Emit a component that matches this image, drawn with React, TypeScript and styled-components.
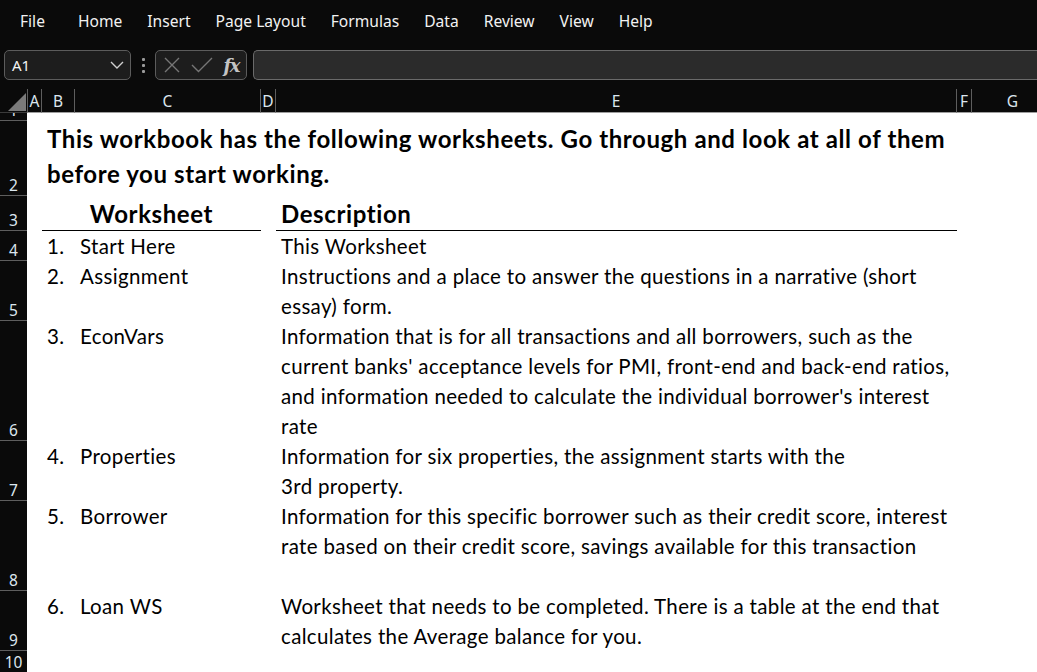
import { FC } from 'react';
import styled, { createGlobalStyle } from 'styled-components';

const GlobalStyle = createGlobalStyle`
  html, body {
    margin: 0;
    padding: 0;
    background: #0a0a0a;
    overflow: hidden;
  }
  * { box-sizing: border-box; }
`;

const Page = styled.div`
  width: 1037px;
  height: 672px;
  overflow: hidden;
  background: #0a0a0a;
  font-family: 'Segoe UI', 'Noto Sans', sans-serif;
  color: #fff;
`;

const MenuBar = styled.nav`
  height: 42px;
  display: flex;
  align-items: center;
  padding-left: 20px;
  gap: 25px;
  font-size: 15.6px;
`;

const MenuItem = styled.span<{ $first?: boolean }>`
  color: #f2f2f2;
  margin-right: ${({ $first }) => ($first ? '8px' : '0')};
`;

const FormulaBar = styled.div`
  display: flex;
  align-items: center;
  padding: 8px 0 9px 4px;
  gap: 6px;
`;

const NameBox = styled.div`
  width: 127px;
  height: 30px;
  border: 1px solid #5c5c5c;
  border-radius: 5px;
  background: #1d1d1d;
  display: flex;
  align-items: center;
  justify-content: space-between;
  padding: 0 6px 0 7px;
  font-size: 15px;
  color: #f4f4f4;
`;

const Grip = styled.div`
  width: 12px;
  display: flex;
  flex-direction: column;
  align-items: center;
  gap: 3px;
  span {
    width: 3px;
    height: 3px;
    background: #9a9a9a;
    border-radius: 1px;
  }
`;

const FormulaButtons = styled.div`
  width: 92px;
  height: 30px;
  border: 1px solid #5c5c5c;
  border-radius: 5px;
  background: #1d1d1d;
  display: flex;
  align-items: center;
  justify-content: space-between;
  padding: 0 5px 0 7px;
`;

const Fx = styled.span`
  font-family: 'DejaVu Serif', 'Liberation Serif', serif;
  font-style: italic;
  font-weight: 700;
  font-size: 18px;
  color: #c4c4c4;
  letter-spacing: -1.5px;
  padding-right: 2px;
`;

const FormulaInput = styled.div`
  flex: 1;
  height: 30px;
  border: 1px solid #6a6a6a;
  border-right: none;
  border-radius: 5px 0 0 5px;
  background: #2b2b2b;
`;

const Sheet = styled.div`
  display: grid;
  grid-template-columns: 27px 15px 33px 186px 15px 681px 15px 82px;
  grid-template-rows: 24px 8px 75px 35px 30px 60px 120px 60px 90px 60px 22px;
`;

const Corner = styled.div`
  position: relative;
  border-bottom: 1px solid #3a3a3a;
  svg { position: absolute; left: 8px; top: 4px; }
`;

const ColHead = styled.div<{ $sep?: boolean }>`
  border-bottom: 1px solid #9e9e9e;
  border-right: ${({ $sep }) => ($sep ? '1px solid #5e5e5e' : '1px solid transparent')};
  display: flex;
  align-items: center;
  justify-content: center;
  font-size: 15.5px;
  color: #dce6ee;
  padding-top: 1px;
`;

const ColHeadLeft = styled(ColHead)`
  border-left: 1px solid #5e5e5e;
`;

const RowHead = styled.div`
  grid-column: 1;
  border-bottom: 1px solid #5e5e5e;
  display: flex;
  align-items: flex-end;
  justify-content: center;
  font-size: 15.5px;
  line-height: 19px;
  color: #dce6ee;
  overflow: hidden;
`;

const Cell = styled.div<{ $col: string; $bold?: boolean; $center?: boolean; $rule?: boolean }>`
  grid-column: ${({ $col }) => $col};
  background: #fff;
  color: #000;
  font-family: Lato, 'Noto Sans', sans-serif;
  font-size: ${({ $bold }) => ($bold ? 24 : 20.5)}px;
  letter-spacing: ${({ $bold }) => ($bold ? 0.6 : 0.34)}px;
  line-height: ${({ $bold }) => ($bold ? 35 : 30)}px;
  font-weight: ${({ $bold }) => ($bold ? 700 : 400)};
  text-align: ${({ $center }) => ($center ? 'center' : 'left')};
  padding-left: ${({ $center }) => ($center ? '0' : '5px')};
  border-bottom: ${({ $rule }) => ($rule ? '1.5px solid #000' : 'none')};
  white-space: nowrap;
  overflow: visible;
`;

const Blank = styled.div<{ $col: string }>`
  grid-column: ${({ $col }) => $col};
  background: #fff;
`;

const XIcon = () => (
  <svg width="18" height="18" viewBox="0 0 18 18" fill="none" stroke="#767676" strokeWidth="1.4">
    <path d="M2 2 L16 16 M16 2 L2 16" />
  </svg>
);

const CheckIcon = () => (
  <svg width="22" height="18" viewBox="0 0 22 18" fill="none" stroke="#767676" strokeWidth="1.4">
    <path d="M1 9 L7.5 15.5 L21 2" />
  </svg>
);

const Chevron = () => (
  <svg width="14" height="8" viewBox="0 0 14 8" fill="none" stroke="#d0d0d0" strokeWidth="1.4">
    <path d="M1 1 L7 7 L13 1" />
  </svg>
);

type Item = { num: string; name: string; desc: string[] };

const items: Item[] = [
  { num: '1.', name: 'Start Here', desc: ['This Worksheet'] },
  { num: '2.', name: 'Assignment', desc: ['Instructions and a place to answer the questions in a narrative (short', 'essay) form.'] },
  {
    num: '3.',
    name: 'EconVars',
    desc: [
      'Information that is for all transactions and all borrowers, such as the',
      "current banks' acceptance levels for PMI, front-end and back-end ratios,",
      "and information needed to calculate the individual borrower's interest",
      'rate',
    ],
  },
  { num: '4.', name: 'Properties', desc: ['Information for six properties, the assignment starts with the', '3rd property.'] },
  {
    num: '5.',
    name: 'Borrower',
    desc: [
      'Information for this specific borrower such as their credit score, interest',
      'rate based on their credit score, savings available for this transaction',
    ],
  },
  { num: '6.', name: 'Loan WS', desc: ['Worksheet that needs to be completed. There is a table at the end that', 'calculates the Average balance for you.'] },
];

const menus = ['File', 'Home', 'Insert', 'Page Layout', 'Formulas', 'Data', 'Review', 'View', 'Help'];

const ItemRow: FC<{ index: number; item: Item }> = ({ index, item }) => (
  <>
    <RowHead>{index}</RowHead>
    <Blank $col="2" />
    <Cell $col="3">{item.num}</Cell>
    <Cell $col="4">{item.name}</Cell>
    <Blank $col="5" />
    <Cell $col="6">
      {item.desc.map((d, j) => (
        <div key={j}>{d}</div>
      ))}
    </Cell>
    <Blank $col="7 / 9" />
  </>
);

const App: FC = () => {
  return (
    <Page>
      <GlobalStyle />
      <MenuBar>
        {menus.map((m, i) => (
          <MenuItem key={m} $first={i === 0}>
            {m}
          </MenuItem>
        ))}
      </MenuBar>
      <FormulaBar>
        <NameBox>
          <span>A1</span>
          <Chevron />
        </NameBox>
        <Grip>
          <span />
          <span />
          <span />
        </Grip>
        <FormulaButtons>
          <XIcon />
          <CheckIcon />
          <Fx>fx</Fx>
        </FormulaButtons>
        <FormulaInput />
      </FormulaBar>
      <Sheet>
        <Corner>
          <svg width="18" height="18" viewBox="0 0 18 18">
            <polygon points="0,18 18,18 18,0" fill="#7a7a7a" />
          </svg>
        </Corner>
        <ColHeadLeft $sep>A</ColHeadLeft>
        <ColHead $sep>B</ColHead>
        <ColHead $sep>C</ColHead>
        <ColHead $sep>D</ColHead>
        <ColHead $sep>E</ColHead>
        <ColHead $sep>F</ColHead>
        <ColHead>G</ColHead>

        <RowHead>1</RowHead>
        <Blank $col="2 / 9" />

        <RowHead>2</RowHead>
        <Blank $col="2" />
        <Cell $col="3 / 9" $bold>
          This workbook has the following worksheets. Go through and look at all of them
          <br />
          before you start working.
        </Cell>

        <RowHead>3</RowHead>
        <Blank $col="2" />
        <Cell $col="3 / 5" $bold $center $rule>
          Worksheet
        </Cell>
        <Blank $col="5" />
        <Cell $col="6" $bold $rule>
          Description
        </Cell>
        <Blank $col="7 / 9" />

        {items.map((it, i) => (
          <ItemRow key={it.num} index={i + 4} item={it} />
        ))}

        <RowHead>10</RowHead>
        <Blank $col="2 / 9" />
      </Sheet>
    </Page>
  );
};

export default App;
